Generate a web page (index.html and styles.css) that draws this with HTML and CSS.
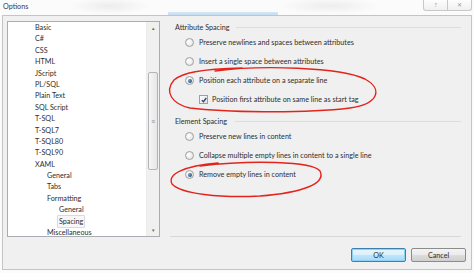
FILE: index.html
```html
<!DOCTYPE html>
<html lang="en">
<head>
  <meta charset="UTF-8" />
  <title>Options</title>
  <link rel="stylesheet" href="styles.css">
</head>
<body>

  <div class="window">

    <!-- Title bar -->
    <div class="titlebar">
      <span class="title">Options</span>
      <div class="caption-buttons">
        <span class="cap-btn">?</span>
        <span class="cap-btn">&#x2715;</span>
      </div>
    </div>

    <div class="dialog">
      <div class="main">

        <!-- Tree -->
        <div class="tree">
          <ul class="tree-list">
            <li class="lvl0">Basic</li>
            <li class="lvl0">C#</li>
            <li class="lvl0">CSS</li>
            <li class="lvl0">HTML</li>
            <li class="lvl0">JScript</li>
            <li class="lvl0">PL/SQL</li>
            <li class="lvl0">Plain Text</li>
            <li class="lvl0">SQL Script</li>
            <li class="lvl0">T-SQL</li>
            <li class="lvl0">T-SQL7</li>
            <li class="lvl0">T-SQL80</li>
            <li class="lvl0">T-SQL90</li>
            <li class="lvl0">XAML</li>
            <li class="lvl1">General</li>
            <li class="lvl1">Tabs</li>
            <li class="lvl1">Formatting</li>
            <li class="lvl2">General</li>
            <li class="lvl2"><span class="selected">Spacing</span></li>
            <li class="lvl1">Miscellaneous</li>
          </ul>
          <div class="scrollbar">
            <div class="sb-btn">&#x25B4;</div>
            <div class="sb-track">
              <div class="sb-thumb"><span class="grip">&#x2261;</span></div>
            </div>
            <div class="sb-btn">&#x25BE;</div>
          </div>
        </div>

        <!-- Settings -->
        <div class="settings">
          <div class="group-title"><span>Attribute Spacing</span><i class="rule"></i></div>
          <div class="option"><span class="radio"></span>Preserve newlines and spaces between attributes</div>
          <div class="option"><span class="radio"></span>Insert a single space between attributes</div>
          <div class="option"><span class="radio checked"></span>Position each attribute on a separate line</div>
          <div class="option sub">
            <span class="checkbox">
              <svg width="6" height="6" viewBox="0 0 6 6"><path d="M0.8 3.1 L2.4 4.7 L5.3 1" fill="none" stroke="#27476f" stroke-width="1.3"/></svg>
            </span>Position first attribute on same line as start tag
          </div>

          <div class="group-title second"><span>Element Spacing</span><i class="rule"></i></div>
          <div class="option"><span class="radio"></span>Preserve new lines in content</div>
          <div class="option"><span class="radio"></span>Collapse multiple empty lines in content to a single line</div>
          <div class="option"><span class="radio checked"></span>Remove empty lines in content</div>
        </div>
      </div>

      <div class="footer">
        <button class="btn default">OK</button>
        <button class="btn">Cancel</button>
      </div>
    </div>

    <!-- Red marker annotations -->
    <svg class="marks" width="474" height="273" viewBox="0 0 474 273">
      <path d="M215 71 C260 65, 340 67, 365 79 C383 89, 379 104, 350 108 C300 114, 222 112, 190 108 C172 104, 164 92, 174 80 C182 73, 200 69, 242 68" />
      <path d="M200 166 C250 160, 312 161, 320 171 C327 184, 300 193, 260 196 C220 198, 181 194, 172 184 C167 174, 184 166, 218 163" />
    </svg>
  </div>

</body>
</html>
```

FILE: styles.css
```css
/* Reset & General */
html, body {
  margin: 0;
  padding: 0;
  background: #fff;
  font-family: Lato, "Noto Sans", sans-serif;
  font-size: 7.2px;
  color: #2e2e2e;
}

.window {
  position: relative;
  width: 474px;
  height: 273px;
  display: flex;
  flex-direction: column;
  background:
    linear-gradient(#d6e7f6, #c4dcf2) 168px 12px / 110px 3px no-repeat,
    radial-gradient(ellipse 40px 8px at 110px 6px, #ececec, transparent),
    radial-gradient(ellipse 50px 8px at 330px 6px, #ededed, transparent),
    #fbfbfb;
  overflow: hidden;
}

/* Title bar */
.titlebar {
  height: 15px;
  display: flex;
  align-items: flex-start;
}

.title {
  padding: 2px 0 0 3px;
  line-height: 10px;
  color: #3a3a3a;
}

.caption-buttons {
  margin-left: auto;
  margin-right: 2px;
  display: flex;
  border: 1px solid #c8c8c8;
  border-top: none;
  border-radius: 0 0 3px 3px;
  background: linear-gradient(#fdfdfd, #f0f0f0);
}

.cap-btn {
  width: 23px;
  height: 10px;
  line-height: 10px;
  text-align: center;
  font-size: 6px;
  color: #999;
}
.cap-btn + .cap-btn {
  border-left: 1px solid #c8c8c8;
}

/* Dialog body */
.dialog {
  flex: 1;
  margin: 0 2px 3px;
  border: 1px solid #c4c4c4;
  background: #f0f0f0;
  display: flex;
  flex-direction: column;
}

.main {
  display: flex;
  padding: 5px 10px 0 4px;
}

/* Tree */
.tree {
  width: 151px;
  height: 214px;
  border: 1px solid #a9adb1;
  background: #fff;
  display: flex;
}

.tree-list {
  flex: 1;
  list-style: none;
  margin: 0;
  padding: 0;
  overflow: hidden;
}

.tree-list li {
  height: 11.4px;
  line-height: 11.4px;
  white-space: nowrap;
}
.tree-list .lvl0 { padding-left: 27px; }
.tree-list .lvl1 { padding-left: 39px; }
.tree-list .lvl2 { padding-left: 51px; }

.selected {
  margin-left: -2px;
  padding: 1px 1px;
  border: 1px solid #dadada;
  border-radius: 1px;
  background: #f7f7f7;
}

.scrollbar {
  width: 12px;
  display: flex;
  flex-direction: column;
  background: #f0f0f0;
  border-left: 1px solid #ececec;
}

.sb-btn {
  height: 12px;
  line-height: 12px;
  text-align: center;
  font-size: 5px;
  color: #666;
}

.sb-track {
  flex: 1;
  padding-top: 38px;
}

.sb-thumb {
  height: 96px;
  margin: 0 1px;
  border: 1px solid #b4b4b4;
  border-radius: 2px;
  background: linear-gradient(90deg, #f6f6f6, #e6e6e6);
  display: flex;
  align-items: center;
  justify-content: center;
}

.grip {
  font-size: 7px;
  color: #888;
}

/* Settings */
.settings {
  flex: 1;
  margin-left: 10px;
  padding-left: 5px;
  border-bottom: 1px solid #d8d8d8;
}

.group-title {
  display: flex;
  align-items: center;
  height: 12px;
}
.group-title.second {
  margin-top: 6px;
}

.rule {
  flex: 1;
  height: 1px;
  margin-left: 7px;
  background: #d5dfe5;
}

.option {
  height: 19px;
  display: flex;
  align-items: center;
  padding-left: 10px;
  white-space: nowrap;
}
.option.sub {
  padding-left: 24px;
}

.radio {
  width: 7px;
  height: 7px;
  margin-right: 5px;
  border: 1px solid #a0a0a0;
  border-radius: 50%;
  background: radial-gradient(circle at 40% 40%, #ffffff, #dddddd);
  display: flex;
  align-items: center;
  justify-content: center;
}
.radio.checked::after {
  content: "";
  width: 4px;
  height: 4px;
  border-radius: 50%;
  background: radial-gradient(circle at 35% 35%, #6d9ccf, #1d3f66);
}

.checkbox {
  width: 7px;
  height: 7px;
  margin-right: 4px;
  border: 1px solid #a0a0a0;
  background: linear-gradient(135deg, #ffffff, #e0e0e0);
  display: flex;
  align-items: center;
  justify-content: center;
}

/* Footer buttons */
.footer {
  display: flex;
  justify-content: flex-end;
  gap: 5px;
  padding: 11px 5px 0 0;
}

.btn {
  width: 55px;
  height: 14px;
  padding: 0;
  font-family: inherit;
  font-size: 7.2px;
  color: #2e2e2e;
  border: 1px solid #8c8c8c;
  border-radius: 2px;
  background: linear-gradient(#f4f4f4 0%, #ebebeb 50%, #dddddd 51%, #cfcfcf 100%);
}

.btn.default {
  border-color: #3c7fb1;
  box-shadow: inset 0 0 0 1px #8fd0f5;
  background: linear-gradient(#eaf6fd 0%, #d9f0fc 50%, #bee6fd 51%, #a7d9f5 100%);
}

/* Annotation marks */
.marks {
  position: absolute;
  top: 0;
  left: 0;
  pointer-events: none;
}
.marks path {
  fill: none;
  stroke: #e3241d;
  stroke-width: 1.4;
  stroke-linecap: round;
}
```
